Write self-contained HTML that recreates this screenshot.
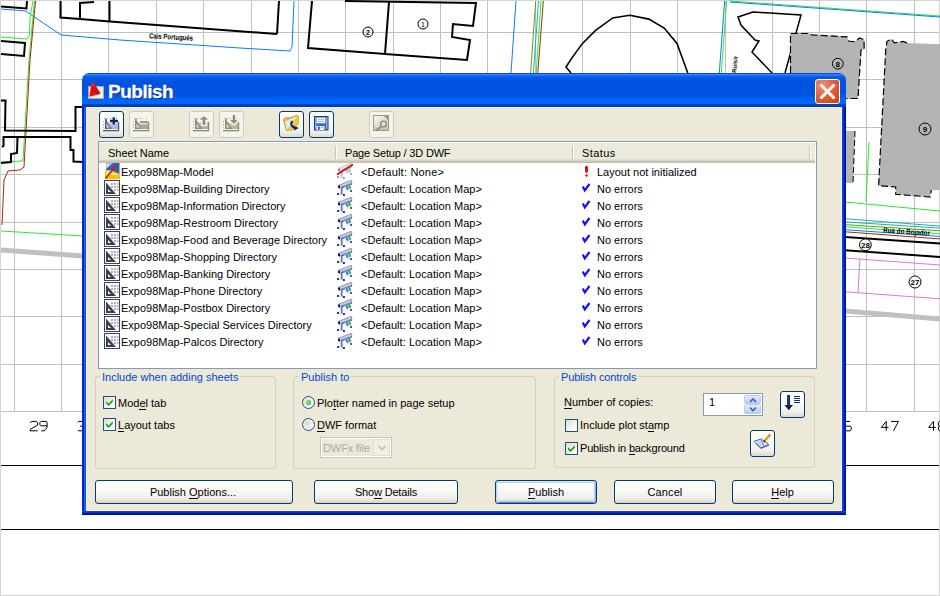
<!DOCTYPE html><html><head><meta charset="utf-8"><title>Publish</title><style>
html,body{margin:0;padding:0;width:940px;height:596px;overflow:hidden;background:#fff}
body{position:relative;font-family:"Liberation Sans",sans-serif;font-size:11px;color:#000}
#wrap{position:absolute;left:0;top:0;width:940px;height:596px}
.a{position:absolute}
.t{position:absolute;white-space:pre;line-height:13px;font-size:11px;letter-spacing:0px}
#dlg{position:absolute;left:82px;top:73px;width:764px;height:442px}
#title{position:absolute;left:0;top:0;width:764px;height:34px;border-radius:7px 7px 0 0;
 background:linear-gradient(to bottom,#0a48d8 0px,#0a48d8 1px,#3088ff 1px,#2a80fa 2px,#0e64ee 3px,#0058e8 5px,#0052e0 10px,#0052e0 21px,#005ef2 24px,#0066fc 28px,#0066fc 31px,#0048d4 31px,#0040c8 32px,#0038b8 34px)}
#lb{position:absolute;left:0;top:34px;width:4px;height:404px;background:linear-gradient(to right,#0a2fd0 0,#0a2fd0 1px,#0010d8 1px,#0010d8 2px,#1a6aef 2px,#1a6aef 3px,#0550e6 3px)}
#rb{position:absolute;left:760px;top:34px;width:4px;height:404px;background:linear-gradient(to right,#0840f0 0,#0840f0 1px,#0436e0 1px,#0436e0 2px,#0020b0 2px,#0020b0 3px,#00138a 3px)}
#bb{position:absolute;left:0;top:438px;width:764px;height:4px;background:linear-gradient(to bottom,#0a3ff0 0,#0a3ff0 1px,#0733d8 1px,#0733d8 2px,#0016a0 2px,#0016a0 3px,#00138a 3px)}
#client{position:absolute;left:4px;top:34px;width:756px;height:404px;background:#ece9d8;
 box-shadow:inset 1px 0 0 #fdf3da,inset -1px 0 0 #fdf3da,inset 0 -1px 0 #fdf3da,inset 0 1px 0 #f8f4e4}
.btn{position:absolute;box-sizing:border-box;border:1px solid #003c74;border-radius:3px;
 background:linear-gradient(to bottom,#ffffff 0%,#fbfbf9 30%,#f1f0ea 75%,#e5e2d8 90%,#d6d0c5 100%);text-align:center}
.btn span{position:absolute;left:0;right:0;top:5px;line-height:13px;white-space:pre;letter-spacing:0px}
.tb{position:absolute;box-sizing:border-box;width:25px;height:27px;border-radius:3px}
.tb.on{border:1px solid #003c74;background:linear-gradient(to bottom,#fff 0%,#fbfbf9 40%,#f0efe9 80%,#dcd8cc 100%)}
.tb.off{border:1px solid #cfcbbd;background:#f4f3ee}
.grp{position:absolute;box-sizing:border-box;border:1px solid #d0d0bf;border-radius:3px}
.gt{position:absolute;white-space:pre;color:#0046d5;background:#ece9d8;padding:0 2px;line-height:13px;letter-spacing:0px}
.cb{position:absolute;box-sizing:border-box;width:13px;height:13px;border:1px solid #1c5180;
 background:linear-gradient(135deg,#dcdcd7 0%,#f4f4f0 60%,#fff 100%)}
.rd{position:absolute;box-sizing:border-box;width:13px;height:13px;border:1px solid #1c5180;border-radius:50%;
 background:radial-gradient(circle at 35% 35%,#dcdcd7 0%,#f4f4f0 60%,#fff 100%)}
u{text-decoration:none;border-bottom:1px solid #000}
.row{position:absolute;left:0;width:716px;height:17px}
</style></head><body><div id="wrap">
<svg class="a" style="left:0;top:0" width="940" height="596" viewBox="0 0 940 596">
<path d="M14.5 1V411 M61.5 1V411 M108.5 1V411 M156.5 1V411 M203.5 1V411 M251.5 1V411 M298.5 1V411 M345.5 1V411 M393.5 1V411 M440.5 1V411 M487.5 1V411 M535.5 1V411 M582.5 1V411 M630.5 1V411 M677.5 1V411 M725.5 1V411 M772.5 1V411 M819.5 1V411 M866.5 1V411 M914.5 1V411 M1 32.5H939 M1 79.5H939 M1 127.5H939 M1 174.5H939 M1 222.5H939 M1 269.5H939 M1 316.5H939 M1 364.5H939 M1 411.5H939" stroke="#c0c0c0" stroke-width="1" fill="none"/>
<rect x="0.5" y="0.5" width="939" height="595" fill="none" stroke="#d4d4d4" stroke-width="1"/>
<path d="M1 465.5H939M1 529.5H939" stroke="#000" stroke-width="1"/>
<polyline points="1,6.5 26.5,8.5 27,1" fill="none" stroke="#000" stroke-width="2" />
<polyline points="60.5,1 60.5,17.5 80,19 110,21.5 277,34" fill="none" stroke="#000" stroke-width="2" />
<polyline points="80,19 80,3 94,2" fill="none" stroke="#000" stroke-width="2" />
<polyline points="109.5,1 109.5,21" fill="none" stroke="#000" stroke-width="2" />
<polyline points="279,1 277,34" fill="none" stroke="#000" stroke-width="2" />
<polyline points="1,9 26,11 33,16 58,33 61,35 120,40 240,48 290,51 292,47 294,1" fill="none" stroke="#0a7cff" stroke-width="1" />
<polyline points="33,1 30,17 29.5,35 27,39 1,37" fill="none" stroke="#2ee82e" stroke-width="1" />
<polyline points="34.5,1 29,60 23,161 1,162" fill="none" stroke="#2ee82e" stroke-width="1" />
<polyline points="35.5,1 30,60 24,167 20,170 8,171 4,180 2,225" fill="none" stroke="#a82c08" stroke-width="1" />
<polyline points="1,41 25,43 24,56 1,54" fill="none" stroke="#000" stroke-width="2" />
<polyline points="312,1 308,48 385,54 389,2" fill="none" stroke="#000" stroke-width="2" />
<polyline points="345,1 476,3 473,26 453,24 452,37 470,40 467,60 385,54" fill="none" stroke="#000" stroke-width="2" />
<circle cx="368" cy="32" r="5" fill="none" stroke="#000" stroke-width="1"/>
<circle cx="423" cy="24" r="5" fill="none" stroke="#000" stroke-width="1"/>
<text x="368" y="35" font-size="7" text-anchor="middle" font-family="Liberation Sans" font-weight="bold">2</text>
<text x="423" y="27" font-size="7" text-anchor="middle" font-family="Liberation Sans">1</text>
<text x="149" y="38.3" font-size="7.5" font-family="Liberation Sans" font-weight="bold" textLength="44" lengthAdjust="spacingAndGlyphs" transform="rotate(3 149 38)">Cais Portugués</text>
<polyline points="516,1 511,73" fill="none" stroke="#0a7cff" stroke-width="1" />
<polyline points="535.7,1 530.6,73" fill="none" stroke="#5aa020" stroke-width="1" />
<polyline points="538.5,1 533.4,73" fill="none" stroke="#20b0b0" stroke-width="1" />
<polyline points="541,1 536.2,73" fill="none" stroke="#2ee82e" stroke-width="1" />
<polyline points="543.3,1 537.8,73" fill="none" stroke="#a82c08" stroke-width="1" />
<polyline points="571,73 566,67 572.3,57.4 582.5,43.4 595.3,30.6 612.7,17.9 629.8,15.3 648.9,19.1 664.2,28.1 677,43.4 687.2,71.5 688,74" fill="none" stroke="#000" stroke-width="1.6" />
<polyline points="724.6,1 719.3,73" fill="none" stroke="#0a7cff" stroke-width="1" />
<polyline points="726.6,1 721.3,73" fill="none" stroke="#2ee82e" stroke-width="1" />
<polyline points="730,1 940,16" fill="none" stroke="#2ee82e" stroke-width="1" />
<polyline points="730,2 940,17" fill="none" stroke="#0a7cff" stroke-width="1" />
<polyline points="785,73 801,15 753,12 738,17 741,25 755,40 759,41 752,52 772,73" fill="none" stroke="#000" stroke-width="1.5" />
<polygon points="790,33 808,33 812,34.4 847,36.4 848.5,41 855,41.8 859.3,37.8 864,39 864.7,49.2 861.3,50 858,99 800,99 790,73" fill="#b4b4b4"/>
<polyline points="790.5,73 790.5,33.5 808,33.5 812,34.9 847,36.9 848.5,41 855,41.8 859.3,38 864,39.5 864.2,49.2 861,50 858,98.5 845,98.5" fill="none" stroke="#000" stroke-width="1.2" stroke-dasharray="7,3"/>
<polygon points="887,41.4 891.4,39 894.3,42.9 902.9,41.4 907,42.9 940,44.3 940,190 931.4,190 930,197 895.7,194.3 895.7,187 878.6,185.7 885.7,50" fill="#b4b4b4"/>
<polyline points="907,42.9 902.9,41.4 894.3,42.9 891.4,39 887,41.4 885.7,50 878.6,185.7 895.7,187 895.7,194.3 930,197 931.4,190" fill="none" stroke="#000" stroke-width="1.2" stroke-dasharray="7,3"/>
<polygon points="845,131 855,131 853,183 845,183" fill="#b4b4b4"/>
<polyline points="855,131 853,183" fill="none" stroke="#000" stroke-width="1" stroke-dasharray="6,3"/>
<circle cx="837.8" cy="63.7" r="5.4" fill="none" stroke="#000" stroke-width="1"/>
<circle cx="925" cy="129" r="6" fill="none" stroke="#000" stroke-width="1"/>
<text x="925" y="132" font-size="8" text-anchor="middle" font-family="Liberation Sans" font-weight="bold">9</text>
<text x="837.8" y="66.5" font-size="8" text-anchor="middle" font-family="Liberation Sans" font-weight="bold">8</text>
<text x="736" y="73" font-size="6" font-family="Liberation Sans" font-weight="bold" transform="rotate(-84 736 73)">Ruisir</text>
<polyline points="869,142 866,202" fill="none" stroke="#2ee82e" stroke-width="1" />
<polyline points="845,202 940,211" fill="none" stroke="#2ee82e" stroke-width="1" />
<polyline points="845,218.7 940,226.1" fill="none" stroke="#20b0b0" stroke-width="1" />
<polyline points="845,221.9 940,228.1" fill="none" stroke="#20b0b0" stroke-width="1" />
<polyline points="845,224.6 940,230.8" fill="none" stroke="#5aa020" stroke-width="1" />
<polyline points="845,226.7 940,233.8" fill="none" stroke="#2ee82e" stroke-width="1" />
<polyline points="845,229.7 940,236.4" fill="none" stroke="#0a7cff" stroke-width="1" />
<polyline points="845,231.8 940,238.9" fill="none" stroke="#a82c08" stroke-width="1" />
<polyline points="845,237 940,243.5" fill="none" stroke="#000" stroke-width="2" />
<polyline points="845,250.2 940,256.9" fill="none" stroke="#000" stroke-width="2" />
<polyline points="845,258 940,265" fill="none" stroke="#d77ad7" stroke-width="1" />
<polyline points="860,259 858,292.3" fill="none" stroke="#d77ad7" stroke-width="1" />
<polyline points="845,291.8 940,298.8" fill="none" stroke="#d77ad7" stroke-width="1" />
<polyline points="845,311 940,319" fill="none" stroke="#c0c0c0" stroke-width="5" />
<circle cx="865.4" cy="244.8" r="5.9" fill="#fff" stroke="#000" stroke-width="1"/>
<text x="865.4" y="247.8" font-size="8" text-anchor="middle" font-family="Liberation Sans" font-weight="bold">28</text>
<circle cx="915" cy="282" r="6" fill="#fff" stroke="#000" stroke-width="1"/>
<text x="915" y="285" font-size="8" text-anchor="middle" font-family="Liberation Sans" font-weight="bold">27</text>
<text x="883" y="232.5" font-size="7.5" font-family="Liberation Sans" font-weight="bold" textLength="47" lengthAdjust="spacingAndGlyphs" transform="rotate(4 883 232)">Rua do Bojador</text>
<polyline points="1,100.5 5.5,100.5 5,130.5 75.5,131 75.5,107 83,107" fill="none" stroke="#000" stroke-width="2" />
<polyline points="2,147 3.5,146 3.5,137 70.5,137 70.5,150 73.5,150 73.5,161.5 83,162" fill="none" stroke="#000" stroke-width="2" />
<polyline points="17.5,137 17,153 11,154 11,162 1,163" fill="none" stroke="#000" stroke-width="2" />
<polyline points="1,231 83,236" fill="none" stroke="#2ee82e" stroke-width="1" />
<polyline points="1,250 83,256" fill="none" stroke="#c0c0c0" stroke-width="5" />
<g fill="none" stroke="#000" stroke-width="1"><path transform="translate(30.2 421)" d="M0 2L1.3 0.4H6L7.4 1.7V4.1L0 8.4V9.8H7.4"/><path transform="translate(39.9 421)" d="M7.4 4.8H1L0 3.8V1.4L1 0.4H6.4L7.1 1.4V6.6L4.4 9.8H1.4"/><path transform="translate(77.5 421)" d="M0 1.4L1 0.4H6.4L7.4 1.4V4.1L6.4 5.1H2.5M6.4 5.1L7.4 6.1V8.8L6.4 9.8H1L0 8.8"/><path transform="translate(87.2 421)" d="M1 0.4H6.4L7.4 1.4V8.8L6.4 9.8H1L0 8.8V1.4Z"/><path transform="translate(834.1 421)" d="M4.8 9.8V0.4L0 6.4H7.1"/><path transform="translate(843.8 421)" d="M6.4 0.4H2L0 3V8.8L1 9.8H6.4L7.4 8.8V6.1L6.4 5.1H0"/><path transform="translate(881.4 421)" d="M4.8 9.8V0.4L0 6.4H7.1"/><path transform="translate(891.1 421)" d="M0 0.4H7.4L2.4 9.8"/><path transform="translate(928.7 421)" d="M4.8 9.8V0.4L0 6.4H7.1"/><path transform="translate(938.4 421)" d="M1 0.4H6.4L7.4 1.4V4.1L6.4 5.1H1L0 6.1V8.8L1 9.8H6.4L7.4 8.8V6.1L6.4 5.1M1 5.1L0 4.1V1.4L1 0.4"/></g>
</svg>
<div id="dlg">
<div id="title"></div><div id="lb"></div><div id="rb"></div><div id="bb"></div>
<svg class="a" style="left:6px;top:10px" width="17" height="17" viewBox="0 0 17 17"><rect x="0.5" y="3.5" width="15" height="12" fill="#eeeee8" stroke="#b8a890"/><polygon points="3.2,0.2 6,0.2 12.4,10.4 9,11.8 2,13.8 1.5,12.5" fill="#f02020"/><polygon points="6,0.2 12.4,10.4 9,11.8" fill="#c81010"/><path d="M3.5 12.5 L5 4 L9.5 11 M4.2 9 H8" fill="none" stroke="#a80808" stroke-width="0.9"/></svg>
<div class="a" style="font:bold 19px 'Liberation Sans';color:#0a1880;letter-spacing:-0.5px;white-space:pre;line-height:20px;left:27px;top:10px">Publish</div>
<div class="a" style="left:26px;top:9px;font:bold 19px 'Liberation Sans';color:#fff;letter-spacing:-0.5px;white-space:pre;line-height:20px;-webkit-text-stroke:0.3px #fff">Publish</div>
<div class="a" style="left:733px;top:6px;width:25px;height:25px;box-sizing:border-box;border:1px solid #fff;border-radius:3px;background:radial-gradient(circle at 30% 25%,#f09070 0%,#e05a30 55%,#c83c10 100%)"><svg class="a" style="left:0;top:0" width="23" height="23" viewBox="0 0 23 23"><path d="M4.5 4.5 L18.5 18.5 M18.5 4.5 L4.5 18.5" stroke="#fff" stroke-width="3"/></svg></div>
<div id="client"></div>
</div>
<div class="tb on" style="left:99px;top:111px">
<div class="a" style="left:3px;top:3px"><svg width="17" height="17" viewBox="0 0 17 17"><defs><linearGradient id="gadd" x1="0" y1="0" x2="1" y2="1"><stop offset="0" stop-color="#dde0f6"/><stop offset="1" stop-color="#a0a8d8"/></linearGradient></defs><rect x="2" y="7" width="13" height="7" fill="url(#gadd)"/><rect x="0" y="15" width="16" height="1.3" fill="#5a5a6e"/><rect x="15" y="7" width="1.2" height="9" fill="#5a5a6e"/><path d="M1 3.5h1M4 3.5h1M7 3.5h1M13 3.5h1M0.5 6v1M0.5 9v1M0.5 12v1" stroke="#a0a8d8" stroke-width="1"/><polygon points="2,3.7 2,14 9.6,14" fill="#787890"/><rect x="2" y="3.7" width="1.8" height="10.3" fill="#5a5a6e"/><polygon points="3.5,8.5 3.5,12.5 6.5,12.5" fill="#f4f4f4" opacity="0.85"/><path d="M10.75 2.3v7.3M7 5.95h8" stroke="#0a2a60" stroke-width="2.3"/></svg></div>
</div>
<div class="tb off" style="left:129px;top:111px">
<div class="a" style="left:3px;top:3px"><svg width="17" height="17" viewBox="0 0 17 17"><defs><linearGradient id="grem" x1="0" y1="0" x2="1" y2="1"><stop offset="0" stop-color="#e4e2d6"/><stop offset="1" stop-color="#a8a690"/></linearGradient></defs><rect x="2" y="7" width="13" height="7" fill="url(#grem)"/><rect x="0" y="15" width="16" height="1.3" fill="#8c8a76"/><rect x="15" y="7" width="1.2" height="9" fill="#8c8a76"/><path d="M1 3.5h1M4 3.5h1M7 3.5h1M13 3.5h1M0.5 6v1M0.5 9v1M0.5 12v1" stroke="#a8a690" stroke-width="1"/><polygon points="2,3.7 2,14 9.6,14" fill="#8c8a76"/><rect x="2" y="3.7" width="1.8" height="10.3" fill="#8c8a76"/><polygon points="3.5,8.5 3.5,12.5 6.5,12.5" fill="#f4f4f4" opacity="0.85"/><rect x="7" y="6.2" width="8" height="1.6" fill="#8c8a76"/><rect x="7" y="8.3" width="8" height="0.9" fill="#f4f4f0"/><rect x="7" y="9.6" width="8" height="3.6" fill="#a8a690"/></svg></div>
</div>
<div class="tb off" style="left:189px;top:111px">
<div class="a" style="left:3px;top:3px"><svg width="17" height="17" viewBox="0 0 17 17"><defs><linearGradient id="gup" x1="0" y1="0" x2="1" y2="1"><stop offset="0" stop-color="#e4e2d6"/><stop offset="1" stop-color="#a8a690"/></linearGradient></defs><rect x="2" y="7" width="13" height="7" fill="url(#gup)"/><rect x="0" y="15" width="16" height="1.3" fill="#8c8a76"/><rect x="15" y="7" width="1.2" height="9" fill="#8c8a76"/><path d="M1 3.5h1M4 3.5h1M7 3.5h1M13 3.5h1M0.5 6v1M0.5 9v1M0.5 12v1" stroke="#a8a690" stroke-width="1"/><polygon points="2,3.7 2,14 9.6,14" fill="#8c8a76"/><rect x="2" y="3.7" width="1.8" height="10.3" fill="#8c8a76"/><polygon points="3.5,8.5 3.5,12.5 6.5,12.5" fill="#f4f4f4" opacity="0.85"/><path d="M9 5v5.5h4.5V5" fill="none" stroke="#f4f4f0" stroke-width="1.2"/><polygon points="7.1,4.8 11,1 14.8,4.8" fill="#8c8a76"/><rect x="9.8" y="4.5" width="2.3" height="5.2" fill="#8c8a76"/></svg></div>
</div>
<div class="tb off" style="left:219px;top:111px">
<div class="a" style="left:3px;top:3px"><svg width="17" height="17" viewBox="0 0 17 17"><defs><linearGradient id="gdown" x1="0" y1="0" x2="1" y2="1"><stop offset="0" stop-color="#e4e2d6"/><stop offset="1" stop-color="#a8a690"/></linearGradient></defs><rect x="2" y="7" width="13" height="7" fill="url(#gdown)"/><rect x="0" y="15" width="16" height="1.3" fill="#8c8a76"/><rect x="15" y="7" width="1.2" height="9" fill="#8c8a76"/><path d="M1 3.5h1M4 3.5h1M7 3.5h1M13 3.5h1M0.5 6v1M0.5 9v1M0.5 12v1" stroke="#a8a690" stroke-width="1"/><polygon points="2,3.7 2,14 9.6,14" fill="#8c8a76"/><rect x="2" y="3.7" width="1.8" height="10.3" fill="#8c8a76"/><polygon points="3.5,8.5 3.5,12.5 6.5,12.5" fill="#f4f4f4" opacity="0.85"/><polyline points="6.5,5.5 11,9.8 15.5,5.5" fill="none" stroke="#f4f4f0" stroke-width="1.2"/><rect x="9.8" y="0" width="2.3" height="5.5" fill="#8c8a76"/><polygon points="7.1,5.1 11,8.7 14.8,5.1" fill="#8c8a76"/></svg></div>
</div>
<div class="tb on" style="left:279px;top:111px">
<svg class="a" style="left:2px;top:2px" width="18" height="18" viewBox="0 0 18 18"><polygon points="1.5,5.2 4.2,3.3 8.3,3.8 15.1,1.1 16.9,2.9 16,10.6 10.6,16 4.2,16.5 1.5,6" fill="#e8b828" stroke="#c09018" stroke-width="0.7"/><polygon points="2.9,7.4 15.1,2 9.7,10.6 4.7,16" fill="#d8ecf8"/><polygon points="15.1,2 16.5,3 15.8,10 10.5,15.5 4.7,16 9.7,10.6" fill="#f0c838"/><path d="M10.8 7.2 C8.2 8.8 8.6 11.8 12.2 13.6" fill="none" stroke="#102868" stroke-width="2"/><polygon points="11.2,11.6 16.9,14 12.3,16.6" fill="#102868"/></svg>
</div>
<div class="tb on" style="left:309px;top:111px">
<svg class="a" style="left:2px;top:2px" width="18" height="18" viewBox="0 0 18 18"><rect x="2.5" y="2.5" width="13.5" height="13.5" fill="#3a6cc8" stroke="#203a88" stroke-width="1"/><rect x="3.2" y="3" width="1.2" height="12" fill="#90c0f0"/><rect x="14.2" y="3" width="1.2" height="12" fill="#90c0f0"/><rect x="4.7" y="3.6" width="8.6" height="5.6" fill="#fafcff"/><path d="M6 5.6h6M6 7.4h6" stroke="#90a8c8" stroke-width="0.8"/><rect x="4.5" y="12" width="8" height="4" fill="#e8f0f8"/><rect x="6" y="12.6" width="1.6" height="3" fill="#203a88"/><rect x="9" y="12.5" width="2.5" height="1.6" fill="#c8c060"/></svg>
</div>
<div class="tb off" style="left:369px;top:111px">
<svg class="a" style="left:2px;top:2px" width="18" height="18" viewBox="0 0 18 18"><defs><linearGradient id="gpv" x1="0" y1="0" x2="1" y2="1"><stop offset="0" stop-color="#fafaf6"/><stop offset="1" stop-color="#c8c6b8"/></linearGradient></defs><rect x="1" y="1" width="16" height="16" fill="#9a9886"/><polygon points="2,2 12,2 16,6 16,13 2,13" fill="url(#gpv)"/><rect x="2" y="13" width="14" height="3" fill="#c8c6b8"/><circle cx="11.5" cy="10" r="2.8" fill="#e4e2da" stroke="#8c8a76" stroke-width="1.3"/><path d="M9.3 12.3 L4.3 16.5" stroke="#8c8a76" stroke-width="1.7"/></svg>
</div>
<div class="a" style="left:98px;top:141px;width:719px;height:228px;box-sizing:border-box;border:1px solid #7f9db9;background:#fff"></div>
<div class="a" style="left:99px;top:142px;width:716px;height:21px;background:linear-gradient(to bottom,#fff 0,#fff 1px,#ebeadb 1px,#ebeadb 17px,#e2dfcf 17px,#e2dfcf 18px,#d6d2c2 18px,#d6d2c2 19px,#cbc7b8 19px,#cbc7b8 20px,#c4c0b0 20px)"></div>
<div class="a" style="left:335px;top:146px;width:1px;height:13px;background:#c7c5b2;box-shadow:1px 0 0 #fff"></div>
<div class="a" style="left:572px;top:146px;width:1px;height:13px;background:#c7c5b2;box-shadow:1px 0 0 #fff"></div>
<div class="a" style="left:809px;top:146px;width:1px;height:13px;background:#c7c5b2;box-shadow:1px 0 0 #fff"></div>
<div class="t" style="left:108px;top:147px">Sheet Name</div>
<div class="t" style="left:345px;top:147px;letter-spacing:-0.18px">Page Setup / 3D DWF</div>
<div class="t" style="left:582px;top:147px;letter-spacing:0.4px">Status</div>
<div class="a" style="left:104px;top:163px"><svg width="17" height="17" viewBox="0 0 17 17"><rect x="2" y="0" width="13.5" height="12" fill="#2f64b4"/><polygon points="2,0 9,0 2,6" fill="#9cc8f0"/><circle cx="4" cy="2.5" r="1" fill="#fff"/><polygon points="1,7 6,7 16,11 16,16 1,16" fill="#f4c400"/><polygon points="2,8 6,8 15,12 2,12" fill="#ffe880"/><line x1="1.5" y1="15.5" x2="12.5" y2="2" stroke="#e81010" stroke-width="1.7"/></svg></div>
<div class="t" style="left:121px;top:166px">Expo98Map-Model</div>
<div class="a" style="left:336px;top:163px"><svg width="18" height="17" viewBox="0 0 18 17"><g opacity="0.5"><polygon points="2,5.5 15.3,0.2 16,3.2 2.9,8" fill="#c4cce4" stroke="#5a6898" stroke-width="0.6"/><polygon points="2.9,8 16,3.2 16,4.8 3.5,9.2" fill="#5a6aa0"/><rect x="2" y="5.6" width="2" height="2.4" fill="#1a2050"/><rect x="4" y="7.5" width="2.6" height="7" fill="#6878b0"/><rect x="4" y="7.5" width="1" height="7" fill="#d8e0f0"/><rect x="1.1" y="13" width="2" height="2" fill="#283070"/><rect x="6.9" y="14" width="2" height="2" fill="#283070"/><polygon points="8.5,6.5 14.5,4.5 16.5,10 10.5,12.5" fill="#e8ecf4"/><polygon points="9.3,6.4 11.3,5.6 12.8,9.4 10.8,10" fill="#3a80e0"/><polygon points="11.9,5.2 13.7,4.6 15.2,8.6 13.3,9.1" fill="#20b040"/><rect x="14.1" y="10.2" width="1.9" height="1.6" fill="#283070"/></g><line x1="1" y1="11.5" x2="17" y2="1.5" stroke="#e80000" stroke-width="1.7"/></svg></div>
<div class="t" style="left:361px;top:166px;letter-spacing:0.2px">&lt;Default: None&gt;</div>
<div class="a" style="left:584px;top:165px"><svg width="6" height="12" viewBox="0 0 6 12"><path d="M2.5 0.5 L1 2 L1 6 L2 8 L3 8 L4 6 L4 2 Z" fill="#ff0000"/><path d="M2.5 9 L4 10.5 L2.5 12 L1 10.5 Z" fill="#ff0000"/></svg></div>
<div class="t" style="left:597px;top:166px">Layout not initialized</div>
<div class="a" style="left:104px;top:180px"><svg width="17" height="17" viewBox="0 0 17 17"><rect x="0.5" y="0.5" width="15" height="15" fill="#fff" stroke="#3c4454"/><path d="M7 3h2v2h-2zM10 3h2v2h-2zM13 3h1.5v2h-1.5zM10 6h2v2h-2zM13 6h1.5v2h-1.5zM10 9h2v2h-2zM13 9h1.5v2h-1.5zM7 6h2v2h-2z" fill="#a8b0c0"/><polygon points="2,2.5 2,14 12,14" fill="#3a4050"/><polygon points="4,9 4,12 7,12" fill="#fff"/></svg></div>
<div class="t" style="left:121px;top:183px">Expo98Map-Building Directory</div>
<div class="a" style="left:336px;top:180px"><svg width="18" height="17" viewBox="0 0 18 17"><g><polygon points="2,5.5 15.3,0.2 16,3.2 2.9,8" fill="#c4cce4" stroke="#5a6898" stroke-width="0.6"/><polygon points="2.9,8 16,3.2 16,4.8 3.5,9.2" fill="#5a6aa0"/><rect x="2" y="5.6" width="2" height="2.4" fill="#1a2050"/><rect x="4" y="7.5" width="2.6" height="7" fill="#6878b0"/><rect x="4" y="7.5" width="1" height="7" fill="#d8e0f0"/><rect x="1.1" y="13" width="2" height="2" fill="#283070"/><rect x="6.9" y="14" width="2" height="2" fill="#283070"/><polygon points="8.5,6.5 14.5,4.5 16.5,10 10.5,12.5" fill="#e8ecf4"/><polygon points="9.3,6.4 11.3,5.6 12.8,9.4 10.8,10" fill="#3a80e0"/><polygon points="11.9,5.2 13.7,4.6 15.2,8.6 13.3,9.1" fill="#20b040"/><rect x="14.1" y="10.2" width="1.9" height="1.6" fill="#283070"/></g></svg></div>
<div class="t" style="left:361px;top:183px;letter-spacing:0.05px">&lt;Default: Location Map&gt;</div>
<div class="a" style="left:581px;top:183px"><svg width="10" height="10" viewBox="0 0 10 10"><path d="M1.8 3.5 L3.8 7.5 L8.5 1" fill="none" stroke="#1414f8" stroke-width="2.2"/></svg></div>
<div class="t" style="left:597px;top:183px">No errors</div>
<div class="a" style="left:104px;top:197px"><svg width="17" height="17" viewBox="0 0 17 17"><rect x="0.5" y="0.5" width="15" height="15" fill="#fff" stroke="#3c4454"/><path d="M7 3h2v2h-2zM10 3h2v2h-2zM13 3h1.5v2h-1.5zM10 6h2v2h-2zM13 6h1.5v2h-1.5zM10 9h2v2h-2zM13 9h1.5v2h-1.5zM7 6h2v2h-2z" fill="#a8b0c0"/><polygon points="2,2.5 2,14 12,14" fill="#3a4050"/><polygon points="4,9 4,12 7,12" fill="#fff"/></svg></div>
<div class="t" style="left:121px;top:200px">Expo98Map-Information Directory</div>
<div class="a" style="left:336px;top:197px"><svg width="18" height="17" viewBox="0 0 18 17"><g><polygon points="2,5.5 15.3,0.2 16,3.2 2.9,8" fill="#c4cce4" stroke="#5a6898" stroke-width="0.6"/><polygon points="2.9,8 16,3.2 16,4.8 3.5,9.2" fill="#5a6aa0"/><rect x="2" y="5.6" width="2" height="2.4" fill="#1a2050"/><rect x="4" y="7.5" width="2.6" height="7" fill="#6878b0"/><rect x="4" y="7.5" width="1" height="7" fill="#d8e0f0"/><rect x="1.1" y="13" width="2" height="2" fill="#283070"/><rect x="6.9" y="14" width="2" height="2" fill="#283070"/><polygon points="8.5,6.5 14.5,4.5 16.5,10 10.5,12.5" fill="#e8ecf4"/><polygon points="9.3,6.4 11.3,5.6 12.8,9.4 10.8,10" fill="#3a80e0"/><polygon points="11.9,5.2 13.7,4.6 15.2,8.6 13.3,9.1" fill="#20b040"/><rect x="14.1" y="10.2" width="1.9" height="1.6" fill="#283070"/></g></svg></div>
<div class="t" style="left:361px;top:200px;letter-spacing:0.05px">&lt;Default: Location Map&gt;</div>
<div class="a" style="left:581px;top:200px"><svg width="10" height="10" viewBox="0 0 10 10"><path d="M1.8 3.5 L3.8 7.5 L8.5 1" fill="none" stroke="#1414f8" stroke-width="2.2"/></svg></div>
<div class="t" style="left:597px;top:200px">No errors</div>
<div class="a" style="left:104px;top:214px"><svg width="17" height="17" viewBox="0 0 17 17"><rect x="0.5" y="0.5" width="15" height="15" fill="#fff" stroke="#3c4454"/><path d="M7 3h2v2h-2zM10 3h2v2h-2zM13 3h1.5v2h-1.5zM10 6h2v2h-2zM13 6h1.5v2h-1.5zM10 9h2v2h-2zM13 9h1.5v2h-1.5zM7 6h2v2h-2z" fill="#a8b0c0"/><polygon points="2,2.5 2,14 12,14" fill="#3a4050"/><polygon points="4,9 4,12 7,12" fill="#fff"/></svg></div>
<div class="t" style="left:121px;top:217px">Expo98Map-Restroom Directory</div>
<div class="a" style="left:336px;top:214px"><svg width="18" height="17" viewBox="0 0 18 17"><g><polygon points="2,5.5 15.3,0.2 16,3.2 2.9,8" fill="#c4cce4" stroke="#5a6898" stroke-width="0.6"/><polygon points="2.9,8 16,3.2 16,4.8 3.5,9.2" fill="#5a6aa0"/><rect x="2" y="5.6" width="2" height="2.4" fill="#1a2050"/><rect x="4" y="7.5" width="2.6" height="7" fill="#6878b0"/><rect x="4" y="7.5" width="1" height="7" fill="#d8e0f0"/><rect x="1.1" y="13" width="2" height="2" fill="#283070"/><rect x="6.9" y="14" width="2" height="2" fill="#283070"/><polygon points="8.5,6.5 14.5,4.5 16.5,10 10.5,12.5" fill="#e8ecf4"/><polygon points="9.3,6.4 11.3,5.6 12.8,9.4 10.8,10" fill="#3a80e0"/><polygon points="11.9,5.2 13.7,4.6 15.2,8.6 13.3,9.1" fill="#20b040"/><rect x="14.1" y="10.2" width="1.9" height="1.6" fill="#283070"/></g></svg></div>
<div class="t" style="left:361px;top:217px;letter-spacing:0.05px">&lt;Default: Location Map&gt;</div>
<div class="a" style="left:581px;top:217px"><svg width="10" height="10" viewBox="0 0 10 10"><path d="M1.8 3.5 L3.8 7.5 L8.5 1" fill="none" stroke="#1414f8" stroke-width="2.2"/></svg></div>
<div class="t" style="left:597px;top:217px">No errors</div>
<div class="a" style="left:104px;top:231px"><svg width="17" height="17" viewBox="0 0 17 17"><rect x="0.5" y="0.5" width="15" height="15" fill="#fff" stroke="#3c4454"/><path d="M7 3h2v2h-2zM10 3h2v2h-2zM13 3h1.5v2h-1.5zM10 6h2v2h-2zM13 6h1.5v2h-1.5zM10 9h2v2h-2zM13 9h1.5v2h-1.5zM7 6h2v2h-2z" fill="#a8b0c0"/><polygon points="2,2.5 2,14 12,14" fill="#3a4050"/><polygon points="4,9 4,12 7,12" fill="#fff"/></svg></div>
<div class="t" style="left:121px;top:234px">Expo98Map-Food and Beverage Directory</div>
<div class="a" style="left:336px;top:231px"><svg width="18" height="17" viewBox="0 0 18 17"><g><polygon points="2,5.5 15.3,0.2 16,3.2 2.9,8" fill="#c4cce4" stroke="#5a6898" stroke-width="0.6"/><polygon points="2.9,8 16,3.2 16,4.8 3.5,9.2" fill="#5a6aa0"/><rect x="2" y="5.6" width="2" height="2.4" fill="#1a2050"/><rect x="4" y="7.5" width="2.6" height="7" fill="#6878b0"/><rect x="4" y="7.5" width="1" height="7" fill="#d8e0f0"/><rect x="1.1" y="13" width="2" height="2" fill="#283070"/><rect x="6.9" y="14" width="2" height="2" fill="#283070"/><polygon points="8.5,6.5 14.5,4.5 16.5,10 10.5,12.5" fill="#e8ecf4"/><polygon points="9.3,6.4 11.3,5.6 12.8,9.4 10.8,10" fill="#3a80e0"/><polygon points="11.9,5.2 13.7,4.6 15.2,8.6 13.3,9.1" fill="#20b040"/><rect x="14.1" y="10.2" width="1.9" height="1.6" fill="#283070"/></g></svg></div>
<div class="t" style="left:361px;top:234px;letter-spacing:0.05px">&lt;Default: Location Map&gt;</div>
<div class="a" style="left:581px;top:234px"><svg width="10" height="10" viewBox="0 0 10 10"><path d="M1.8 3.5 L3.8 7.5 L8.5 1" fill="none" stroke="#1414f8" stroke-width="2.2"/></svg></div>
<div class="t" style="left:597px;top:234px">No errors</div>
<div class="a" style="left:104px;top:248px"><svg width="17" height="17" viewBox="0 0 17 17"><rect x="0.5" y="0.5" width="15" height="15" fill="#fff" stroke="#3c4454"/><path d="M7 3h2v2h-2zM10 3h2v2h-2zM13 3h1.5v2h-1.5zM10 6h2v2h-2zM13 6h1.5v2h-1.5zM10 9h2v2h-2zM13 9h1.5v2h-1.5zM7 6h2v2h-2z" fill="#a8b0c0"/><polygon points="2,2.5 2,14 12,14" fill="#3a4050"/><polygon points="4,9 4,12 7,12" fill="#fff"/></svg></div>
<div class="t" style="left:121px;top:251px">Expo98Map-Shopping Directory</div>
<div class="a" style="left:336px;top:248px"><svg width="18" height="17" viewBox="0 0 18 17"><g><polygon points="2,5.5 15.3,0.2 16,3.2 2.9,8" fill="#c4cce4" stroke="#5a6898" stroke-width="0.6"/><polygon points="2.9,8 16,3.2 16,4.8 3.5,9.2" fill="#5a6aa0"/><rect x="2" y="5.6" width="2" height="2.4" fill="#1a2050"/><rect x="4" y="7.5" width="2.6" height="7" fill="#6878b0"/><rect x="4" y="7.5" width="1" height="7" fill="#d8e0f0"/><rect x="1.1" y="13" width="2" height="2" fill="#283070"/><rect x="6.9" y="14" width="2" height="2" fill="#283070"/><polygon points="8.5,6.5 14.5,4.5 16.5,10 10.5,12.5" fill="#e8ecf4"/><polygon points="9.3,6.4 11.3,5.6 12.8,9.4 10.8,10" fill="#3a80e0"/><polygon points="11.9,5.2 13.7,4.6 15.2,8.6 13.3,9.1" fill="#20b040"/><rect x="14.1" y="10.2" width="1.9" height="1.6" fill="#283070"/></g></svg></div>
<div class="t" style="left:361px;top:251px;letter-spacing:0.05px">&lt;Default: Location Map&gt;</div>
<div class="a" style="left:581px;top:251px"><svg width="10" height="10" viewBox="0 0 10 10"><path d="M1.8 3.5 L3.8 7.5 L8.5 1" fill="none" stroke="#1414f8" stroke-width="2.2"/></svg></div>
<div class="t" style="left:597px;top:251px">No errors</div>
<div class="a" style="left:104px;top:265px"><svg width="17" height="17" viewBox="0 0 17 17"><rect x="0.5" y="0.5" width="15" height="15" fill="#fff" stroke="#3c4454"/><path d="M7 3h2v2h-2zM10 3h2v2h-2zM13 3h1.5v2h-1.5zM10 6h2v2h-2zM13 6h1.5v2h-1.5zM10 9h2v2h-2zM13 9h1.5v2h-1.5zM7 6h2v2h-2z" fill="#a8b0c0"/><polygon points="2,2.5 2,14 12,14" fill="#3a4050"/><polygon points="4,9 4,12 7,12" fill="#fff"/></svg></div>
<div class="t" style="left:121px;top:268px">Expo98Map-Banking Directory</div>
<div class="a" style="left:336px;top:265px"><svg width="18" height="17" viewBox="0 0 18 17"><g><polygon points="2,5.5 15.3,0.2 16,3.2 2.9,8" fill="#c4cce4" stroke="#5a6898" stroke-width="0.6"/><polygon points="2.9,8 16,3.2 16,4.8 3.5,9.2" fill="#5a6aa0"/><rect x="2" y="5.6" width="2" height="2.4" fill="#1a2050"/><rect x="4" y="7.5" width="2.6" height="7" fill="#6878b0"/><rect x="4" y="7.5" width="1" height="7" fill="#d8e0f0"/><rect x="1.1" y="13" width="2" height="2" fill="#283070"/><rect x="6.9" y="14" width="2" height="2" fill="#283070"/><polygon points="8.5,6.5 14.5,4.5 16.5,10 10.5,12.5" fill="#e8ecf4"/><polygon points="9.3,6.4 11.3,5.6 12.8,9.4 10.8,10" fill="#3a80e0"/><polygon points="11.9,5.2 13.7,4.6 15.2,8.6 13.3,9.1" fill="#20b040"/><rect x="14.1" y="10.2" width="1.9" height="1.6" fill="#283070"/></g></svg></div>
<div class="t" style="left:361px;top:268px;letter-spacing:0.05px">&lt;Default: Location Map&gt;</div>
<div class="a" style="left:581px;top:268px"><svg width="10" height="10" viewBox="0 0 10 10"><path d="M1.8 3.5 L3.8 7.5 L8.5 1" fill="none" stroke="#1414f8" stroke-width="2.2"/></svg></div>
<div class="t" style="left:597px;top:268px">No errors</div>
<div class="a" style="left:104px;top:282px"><svg width="17" height="17" viewBox="0 0 17 17"><rect x="0.5" y="0.5" width="15" height="15" fill="#fff" stroke="#3c4454"/><path d="M7 3h2v2h-2zM10 3h2v2h-2zM13 3h1.5v2h-1.5zM10 6h2v2h-2zM13 6h1.5v2h-1.5zM10 9h2v2h-2zM13 9h1.5v2h-1.5zM7 6h2v2h-2z" fill="#a8b0c0"/><polygon points="2,2.5 2,14 12,14" fill="#3a4050"/><polygon points="4,9 4,12 7,12" fill="#fff"/></svg></div>
<div class="t" style="left:121px;top:285px">Expo98Map-Phone Directory</div>
<div class="a" style="left:336px;top:282px"><svg width="18" height="17" viewBox="0 0 18 17"><g><polygon points="2,5.5 15.3,0.2 16,3.2 2.9,8" fill="#c4cce4" stroke="#5a6898" stroke-width="0.6"/><polygon points="2.9,8 16,3.2 16,4.8 3.5,9.2" fill="#5a6aa0"/><rect x="2" y="5.6" width="2" height="2.4" fill="#1a2050"/><rect x="4" y="7.5" width="2.6" height="7" fill="#6878b0"/><rect x="4" y="7.5" width="1" height="7" fill="#d8e0f0"/><rect x="1.1" y="13" width="2" height="2" fill="#283070"/><rect x="6.9" y="14" width="2" height="2" fill="#283070"/><polygon points="8.5,6.5 14.5,4.5 16.5,10 10.5,12.5" fill="#e8ecf4"/><polygon points="9.3,6.4 11.3,5.6 12.8,9.4 10.8,10" fill="#3a80e0"/><polygon points="11.9,5.2 13.7,4.6 15.2,8.6 13.3,9.1" fill="#20b040"/><rect x="14.1" y="10.2" width="1.9" height="1.6" fill="#283070"/></g></svg></div>
<div class="t" style="left:361px;top:285px;letter-spacing:0.05px">&lt;Default: Location Map&gt;</div>
<div class="a" style="left:581px;top:285px"><svg width="10" height="10" viewBox="0 0 10 10"><path d="M1.8 3.5 L3.8 7.5 L8.5 1" fill="none" stroke="#1414f8" stroke-width="2.2"/></svg></div>
<div class="t" style="left:597px;top:285px">No errors</div>
<div class="a" style="left:104px;top:299px"><svg width="17" height="17" viewBox="0 0 17 17"><rect x="0.5" y="0.5" width="15" height="15" fill="#fff" stroke="#3c4454"/><path d="M7 3h2v2h-2zM10 3h2v2h-2zM13 3h1.5v2h-1.5zM10 6h2v2h-2zM13 6h1.5v2h-1.5zM10 9h2v2h-2zM13 9h1.5v2h-1.5zM7 6h2v2h-2z" fill="#a8b0c0"/><polygon points="2,2.5 2,14 12,14" fill="#3a4050"/><polygon points="4,9 4,12 7,12" fill="#fff"/></svg></div>
<div class="t" style="left:121px;top:302px">Expo98Map-Postbox Directory</div>
<div class="a" style="left:336px;top:299px"><svg width="18" height="17" viewBox="0 0 18 17"><g><polygon points="2,5.5 15.3,0.2 16,3.2 2.9,8" fill="#c4cce4" stroke="#5a6898" stroke-width="0.6"/><polygon points="2.9,8 16,3.2 16,4.8 3.5,9.2" fill="#5a6aa0"/><rect x="2" y="5.6" width="2" height="2.4" fill="#1a2050"/><rect x="4" y="7.5" width="2.6" height="7" fill="#6878b0"/><rect x="4" y="7.5" width="1" height="7" fill="#d8e0f0"/><rect x="1.1" y="13" width="2" height="2" fill="#283070"/><rect x="6.9" y="14" width="2" height="2" fill="#283070"/><polygon points="8.5,6.5 14.5,4.5 16.5,10 10.5,12.5" fill="#e8ecf4"/><polygon points="9.3,6.4 11.3,5.6 12.8,9.4 10.8,10" fill="#3a80e0"/><polygon points="11.9,5.2 13.7,4.6 15.2,8.6 13.3,9.1" fill="#20b040"/><rect x="14.1" y="10.2" width="1.9" height="1.6" fill="#283070"/></g></svg></div>
<div class="t" style="left:361px;top:302px;letter-spacing:0.05px">&lt;Default: Location Map&gt;</div>
<div class="a" style="left:581px;top:302px"><svg width="10" height="10" viewBox="0 0 10 10"><path d="M1.8 3.5 L3.8 7.5 L8.5 1" fill="none" stroke="#1414f8" stroke-width="2.2"/></svg></div>
<div class="t" style="left:597px;top:302px">No errors</div>
<div class="a" style="left:104px;top:316px"><svg width="17" height="17" viewBox="0 0 17 17"><rect x="0.5" y="0.5" width="15" height="15" fill="#fff" stroke="#3c4454"/><path d="M7 3h2v2h-2zM10 3h2v2h-2zM13 3h1.5v2h-1.5zM10 6h2v2h-2zM13 6h1.5v2h-1.5zM10 9h2v2h-2zM13 9h1.5v2h-1.5zM7 6h2v2h-2z" fill="#a8b0c0"/><polygon points="2,2.5 2,14 12,14" fill="#3a4050"/><polygon points="4,9 4,12 7,12" fill="#fff"/></svg></div>
<div class="t" style="left:121px;top:319px">Expo98Map-Special Services Directory</div>
<div class="a" style="left:336px;top:316px"><svg width="18" height="17" viewBox="0 0 18 17"><g><polygon points="2,5.5 15.3,0.2 16,3.2 2.9,8" fill="#c4cce4" stroke="#5a6898" stroke-width="0.6"/><polygon points="2.9,8 16,3.2 16,4.8 3.5,9.2" fill="#5a6aa0"/><rect x="2" y="5.6" width="2" height="2.4" fill="#1a2050"/><rect x="4" y="7.5" width="2.6" height="7" fill="#6878b0"/><rect x="4" y="7.5" width="1" height="7" fill="#d8e0f0"/><rect x="1.1" y="13" width="2" height="2" fill="#283070"/><rect x="6.9" y="14" width="2" height="2" fill="#283070"/><polygon points="8.5,6.5 14.5,4.5 16.5,10 10.5,12.5" fill="#e8ecf4"/><polygon points="9.3,6.4 11.3,5.6 12.8,9.4 10.8,10" fill="#3a80e0"/><polygon points="11.9,5.2 13.7,4.6 15.2,8.6 13.3,9.1" fill="#20b040"/><rect x="14.1" y="10.2" width="1.9" height="1.6" fill="#283070"/></g></svg></div>
<div class="t" style="left:361px;top:319px;letter-spacing:0.05px">&lt;Default: Location Map&gt;</div>
<div class="a" style="left:581px;top:319px"><svg width="10" height="10" viewBox="0 0 10 10"><path d="M1.8 3.5 L3.8 7.5 L8.5 1" fill="none" stroke="#1414f8" stroke-width="2.2"/></svg></div>
<div class="t" style="left:597px;top:319px">No errors</div>
<div class="a" style="left:104px;top:333px"><svg width="17" height="17" viewBox="0 0 17 17"><rect x="0.5" y="0.5" width="15" height="15" fill="#fff" stroke="#3c4454"/><path d="M7 3h2v2h-2zM10 3h2v2h-2zM13 3h1.5v2h-1.5zM10 6h2v2h-2zM13 6h1.5v2h-1.5zM10 9h2v2h-2zM13 9h1.5v2h-1.5zM7 6h2v2h-2z" fill="#a8b0c0"/><polygon points="2,2.5 2,14 12,14" fill="#3a4050"/><polygon points="4,9 4,12 7,12" fill="#fff"/></svg></div>
<div class="t" style="left:121px;top:336px">Expo98Map-Palcos Directory</div>
<div class="a" style="left:336px;top:333px"><svg width="18" height="17" viewBox="0 0 18 17"><g><polygon points="2,5.5 15.3,0.2 16,3.2 2.9,8" fill="#c4cce4" stroke="#5a6898" stroke-width="0.6"/><polygon points="2.9,8 16,3.2 16,4.8 3.5,9.2" fill="#5a6aa0"/><rect x="2" y="5.6" width="2" height="2.4" fill="#1a2050"/><rect x="4" y="7.5" width="2.6" height="7" fill="#6878b0"/><rect x="4" y="7.5" width="1" height="7" fill="#d8e0f0"/><rect x="1.1" y="13" width="2" height="2" fill="#283070"/><rect x="6.9" y="14" width="2" height="2" fill="#283070"/><polygon points="8.5,6.5 14.5,4.5 16.5,10 10.5,12.5" fill="#e8ecf4"/><polygon points="9.3,6.4 11.3,5.6 12.8,9.4 10.8,10" fill="#3a80e0"/><polygon points="11.9,5.2 13.7,4.6 15.2,8.6 13.3,9.1" fill="#20b040"/><rect x="14.1" y="10.2" width="1.9" height="1.6" fill="#283070"/></g></svg></div>
<div class="t" style="left:361px;top:336px;letter-spacing:0.05px">&lt;Default: Location Map&gt;</div>
<div class="a" style="left:581px;top:336px"><svg width="10" height="10" viewBox="0 0 10 10"><path d="M1.8 3.5 L3.8 7.5 L8.5 1" fill="none" stroke="#1414f8" stroke-width="2.2"/></svg></div>
<div class="t" style="left:597px;top:336px">No errors</div>
<div class="grp" style="left:95px;top:376px;width:181px;height:93px"></div>
<div class="gt" style="left:100px;top:371px">Include when adding sheets</div>
<div class="grp" style="left:293px;top:376px;width:243px;height:93px"></div>
<div class="gt" style="left:299px;top:371px">Publish to</div>
<div class="grp" style="left:554px;top:376px;width:261px;height:92px"></div>
<div class="gt" style="left:559px;top:371px;letter-spacing:-0.15px">Publish controls</div>
<div class="cb" style="left:103px;top:396px"><svg class="a" style="left:2px;top:2px" width="9" height="9" viewBox="0 0 9 9"><polygon points="0,2.2 2.6,4.6 6.8,0.2 6.8,2.8 2.6,7 0,4.6" fill="#21a121"/></svg></div>
<div class="t" style="left:118px;top:397px">Mod<u>e</u>l tab</div>
<div class="cb" style="left:103px;top:418px"><svg class="a" style="left:2px;top:2px" width="9" height="9" viewBox="0 0 9 9"><polygon points="0,2.2 2.6,4.6 6.8,0.2 6.8,2.8 2.6,7 0,4.6" fill="#21a121"/></svg></div>
<div class="t" style="left:118px;top:419px"><u>L</u>ayout tabs</div>
<div class="rd" style="left:302px;top:396px"><div class="a" style="left:3px;top:3px;width:5px;height:5px;border-radius:50%;background:radial-gradient(circle at 40% 40%,#8cf08c,#21a121)"></div></div>
<div class="t" style="left:317px;top:397px">Plo<u>t</u>ter named in page setup</div>
<div class="rd" style="left:302px;top:418px"></div>
<div class="t" style="left:317px;top:419px"><u>D</u>WF format</div>
<div class="a" style="left:320px;top:437px;width:72px;height:21px;box-sizing:border-box;border:1px solid #c9c7ba;box-shadow:inset 0 0 0 1px #fff;background:#ece9d8"></div>
<div class="t" style="left:323px;top:442px;color:#aca899;letter-spacing:-0.1px">DWFx file</div>
<div class="a" style="left:373px;top:439px;width:17px;height:17px;box-sizing:border-box;border:1px solid #e0ddd0;background:#f2f0e6"><svg class="a" style="left:3px;top:4px" width="10" height="8" viewBox="0 0 10 8"><path d="M1.5 2 L5 5.5 L8.5 2" fill="none" stroke="#c9c7ba" stroke-width="2"/></svg></div>
<div class="t" style="left:564px;top:396px"><u>N</u>umber of copies:</div>
<div class="a" style="left:703px;top:393px;width:60px;height:23px;box-sizing:border-box;border:1px solid #7f9db9;background:#fff"></div>
<div class="t" style="left:709px;top:396px">1</div>
<div class="a" style="left:744px;top:395px;width:17px;height:9px;box-sizing:border-box;border:1px solid #b8cdf5;border-radius:2px;background:linear-gradient(#e4ecfd,#b6caf8)"><svg class="a" style="left:4px;top:1px" width="8" height="6" viewBox="0 0 8 6"><path d="M1 5 L4 2 L7 5" fill="none" stroke="#4d6185" stroke-width="1.6"/></svg></div>
<div class="a" style="left:744px;top:404px;width:17px;height:10px;box-sizing:border-box;border:1px solid #b8cdf5;border-radius:2px;background:linear-gradient(#e4ecfd,#b6caf8)"><svg class="a" style="left:4px;top:1px" width="8" height="6" viewBox="0 0 8 6"><path d="M1 1.5 L4 4.5 L7 1.5" fill="none" stroke="#4d6185" stroke-width="1.6"/></svg></div>
<div class="tb on" style="left:780px;top:391px;width:25px;height:27px"><svg class="a" style="left:3px;top:2px" width="18" height="18" viewBox="0 0 18 18"><defs><linearGradient id="gsort" x1="0" y1="0" x2="1" y2="0"><stop offset="0" stop-color="#2a4a90"/><stop offset="1" stop-color="#102050"/></linearGradient></defs><rect x="3" y="1" width="3" height="11" fill="url(#gsort)"/><polygon points="0.5,11 9,11 4.8,16.3" fill="#102050"/><path d="M10 2.5h6M10 4.5h6M10 6.5h6M10 8.5h6" stroke="#1a3068" stroke-width="1.1"/></svg></div>
<div class="cb" style="left:565px;top:419px"></div>
<div class="t" style="left:580px;top:419px">Include plot st<u>a</u>mp</div>
<div class="cb" style="left:565px;top:442px"><svg class="a" style="left:2px;top:2px" width="9" height="9" viewBox="0 0 9 9"><polygon points="0,2.2 2.6,4.6 6.8,0.2 6.8,2.8 2.6,7 0,4.6" fill="#21a121"/></svg></div>
<div class="t" style="left:580px;top:442px;letter-spacing:-0.17px">Publish in <u>b</u>ackground</div>
<div class="tb on" style="left:750px;top:430px;width:25px;height:27px"><svg class="a" style="left:2px;top:3px" width="19" height="17" viewBox="0 0 19 17"><polygon points="1,7.3 8.3,4.9 15.8,10.6 7.8,13.9" fill="#e4eefc" stroke="#3a64a8" stroke-width="1"/><polygon points="2,8 8.3,6 11,11.5 7.8,12.8" fill="#c4d8f4"/><path d="M8 5.8 L11 11.8" stroke="#5a80c0" stroke-width="1"/><path d="M3 9.5 L8 14.5 L16 11" fill="none" stroke="#3a64a8" stroke-width="1"/><path d="M10.8 7.8 L16.3 1.6" stroke="#e0a000" stroke-width="2.4"/><path d="M10.8 7.8 L11.8 6.7" stroke="#402000" stroke-width="2"/><path d="M16 1.9 L17.2 0.6" stroke="#e06080" stroke-width="2.4"/></svg></div>
<div class="btn" style="left:95px;top:480px;width:198px;height:24px"><span style="left:-2px">Publish <u>O</u>ptions...</span></div>
<div class="btn" style="left:314px;top:480px;width:144px;height:24px"><span style="letter-spacing:-0.17px">Sho<u>w</u> Details</span></div>
<div class="btn" style="left:495px;top:480px;width:102px;height:24px;box-shadow:inset 0 1px 0 #cee7ff,inset 0 2px 0 #bcd4f6,inset 1px 0 0 #bcd4f6,inset 2px 0 0 #d8e6fa,inset -1px 0 0 #89adf4,inset -2px 0 0 #b8d0f8,inset 0 -1px 0 #6982ee,inset 0 -2px 0 #a4bcf0"><span style=""><u>P</u>ublish</span></div>
<div class="btn" style="left:614px;top:480px;width:102px;height:24px"><span style="letter-spacing:0.1px">Cancel</span></div>
<div class="btn" style="left:732px;top:480px;width:102px;height:24px"><span style="left:-1px"><u>H</u>elp</span></div>
</div></body></html>
